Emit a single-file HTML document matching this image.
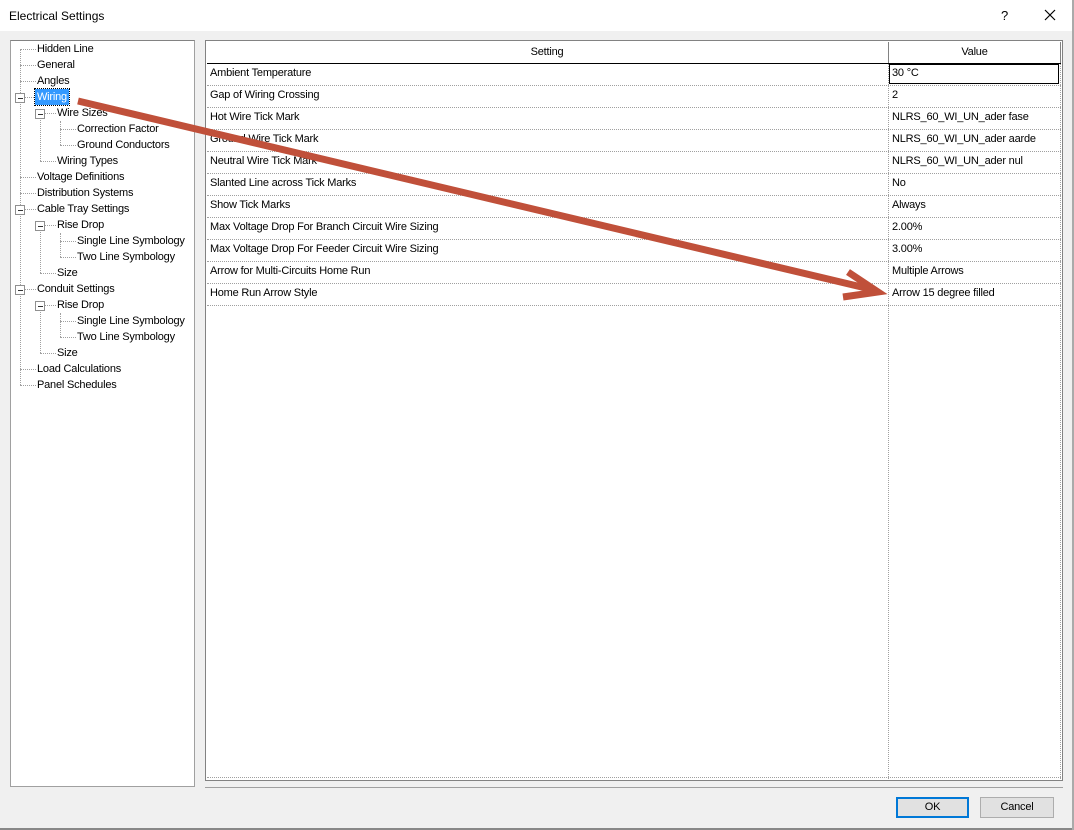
<!DOCTYPE html>
<html><head><style>
body{margin:0;width:1074px;height:830px;background:#f0f0f0;font-family:"Liberation Sans",sans-serif;font-size:11px;letter-spacing:-0.2px;color:#000;position:relative;overflow:hidden}
.abs{position:absolute}
#title{left:0;top:0;width:1074px;height:31px;background:#fff;font-size:12px;letter-spacing:0}
#tree{left:10px;top:40px;width:183px;height:745px;background:#fff;border:1px solid #a0a0a0;border-top-color:#828282}
.t{position:absolute;white-space:nowrap;line-height:14px}
.vd{position:absolute;border-left:1px dotted #a0a0a0;width:0}
.hd{position:absolute;border-top:1px dotted #a0a0a0;height:0}
.box{position:absolute;width:8px;height:8px;border:1px solid #909090;background:#fff}
.box:after{content:"";position:absolute;left:2px;top:4px;width:5px;height:1px;background:#333}
#grid{left:205px;top:40px;width:856px;height:739px;background:#fff;border:1px solid #828282}
.row{position:absolute;left:1px;width:854px;height:21px;border-bottom:1px dotted #a0a0a0}
.row span{position:absolute;top:3px;white-space:nowrap}
.btn{position:absolute;height:19px;background:#e1e1e1;border:1px solid #adadad;text-align:center;line-height:19px}
</style></head><body>
<div id="title" class="abs"><span class="abs" style="left:9px;top:9px">Electrical Settings</span>
<span class="abs" style="left:1001px;top:8px;font-size:13px">?</span>
<svg class="abs" style="left:1044px;top:9px" width="12" height="12"><path d="M1 1L11 11M11 1L1 11" stroke="#000" stroke-width="1.2"/></svg></div>

<div id="tree" class="abs">
<div class="vd" style="left:9px;top:8px;height:336px"></div>
<div class="vd" style="left:29px;top:72px;height:48px"></div>
<div class="vd" style="left:49px;top:80px;height:24px"></div>
<div class="vd" style="left:29px;top:184px;height:48px"></div>
<div class="vd" style="left:49px;top:192px;height:24px"></div>
<div class="vd" style="left:29px;top:264px;height:48px"></div>
<div class="vd" style="left:49px;top:272px;height:24px"></div>
<div class="hd" style="left:9px;top:8px;width:16px"></div>
<div class="hd" style="left:9px;top:24px;width:16px"></div>
<div class="hd" style="left:9px;top:40px;width:16px"></div>
<div class="hd" style="left:9px;top:56px;width:16px"></div>
<div class="hd" style="left:29px;top:72px;width:16px"></div>
<div class="hd" style="left:49px;top:88px;width:16px"></div>
<div class="hd" style="left:49px;top:104px;width:16px"></div>
<div class="hd" style="left:29px;top:120px;width:16px"></div>
<div class="hd" style="left:9px;top:136px;width:16px"></div>
<div class="hd" style="left:9px;top:152px;width:16px"></div>
<div class="hd" style="left:9px;top:168px;width:16px"></div>
<div class="hd" style="left:29px;top:184px;width:16px"></div>
<div class="hd" style="left:49px;top:200px;width:16px"></div>
<div class="hd" style="left:49px;top:216px;width:16px"></div>
<div class="hd" style="left:29px;top:232px;width:16px"></div>
<div class="hd" style="left:9px;top:248px;width:16px"></div>
<div class="hd" style="left:29px;top:264px;width:16px"></div>
<div class="hd" style="left:49px;top:280px;width:16px"></div>
<div class="hd" style="left:49px;top:296px;width:16px"></div>
<div class="hd" style="left:29px;top:312px;width:16px"></div>
<div class="hd" style="left:9px;top:328px;width:16px"></div>
<div class="hd" style="left:9px;top:344px;width:16px"></div>
<div class="box" style="left:4px;top:52px"></div>
<div class="box" style="left:24px;top:68px"></div>
<div class="box" style="left:4px;top:164px"></div>
<div class="box" style="left:24px;top:180px"></div>
<div class="box" style="left:4px;top:244px"></div>
<div class="box" style="left:24px;top:260px"></div>
<div class="t" style="left:26px;top:1px">Hidden Line</div>
<div class="t" style="left:26px;top:17px">General</div>
<div class="t" style="left:26px;top:33px">Angles</div>
<div class="t" style="left:24px;top:48px;background:#3399ff;color:#fff;padding:0 2px;height:16px;line-height:16px;outline:1px dotted #000">Wiring</div>
<div class="t" style="left:46px;top:65px">Wire Sizes</div>
<div class="t" style="left:66px;top:81px">Correction Factor</div>
<div class="t" style="left:66px;top:97px">Ground Conductors</div>
<div class="t" style="left:46px;top:113px">Wiring Types</div>
<div class="t" style="left:26px;top:129px">Voltage Definitions</div>
<div class="t" style="left:26px;top:145px">Distribution Systems</div>
<div class="t" style="left:26px;top:161px">Cable Tray Settings</div>
<div class="t" style="left:46px;top:177px">Rise Drop</div>
<div class="t" style="left:66px;top:193px">Single Line Symbology</div>
<div class="t" style="left:66px;top:209px">Two Line Symbology</div>
<div class="t" style="left:46px;top:225px">Size</div>
<div class="t" style="left:26px;top:241px">Conduit Settings</div>
<div class="t" style="left:46px;top:257px">Rise Drop</div>
<div class="t" style="left:66px;top:273px">Single Line Symbology</div>
<div class="t" style="left:66px;top:289px">Two Line Symbology</div>
<div class="t" style="left:46px;top:305px">Size</div>
<div class="t" style="left:26px;top:321px">Load Calculations</div>
<div class="t" style="left:26px;top:337px">Panel Schedules</div>
</div>

<div id="grid" class="abs">
<div class="abs" style="left:1px;top:1px;width:854px;height:21px;border-bottom:1px solid #000"></div>
<div class="abs" style="left:0;top:1px;width:682px;height:21px;border-right:1px solid #828282;text-align:center;line-height:21px">Setting</div>
<div class="abs" style="left:683px;top:1px;width:171px;height:21px;text-align:center;line-height:21px;border-right:1px solid #828282">Value</div>
<div class="vd" style="left:682px;top:23px;height:715px"></div>
<div class="vd" style="left:854px;top:23px;height:715px"></div>
<div class="row" style="top:23px"><span style="left:3px">Ambient Temperature</span><span style="left:685px">30 °C</span></div>
<div class="abs" style="left:683px;top:23px;width:168px;height:18px;border:1.5px solid #000"></div>
<div class="row" style="top:45px"><span style="left:3px">Gap of Wiring Crossing</span><span style="left:685px">2</span></div>
<div class="row" style="top:67px"><span style="left:3px">Hot Wire Tick Mark</span><span style="left:685px">NLRS_60_WI_UN_ader fase</span></div>
<div class="row" style="top:89px"><span style="left:3px">Ground Wire Tick Mark</span><span style="left:685px">NLRS_60_WI_UN_ader aarde</span></div>
<div class="row" style="top:111px"><span style="left:3px">Neutral Wire Tick Mark</span><span style="left:685px">NLRS_60_WI_UN_ader nul</span></div>
<div class="row" style="top:133px"><span style="left:3px">Slanted Line across Tick Marks</span><span style="left:685px">No</span></div>
<div class="row" style="top:155px"><span style="left:3px">Show Tick Marks</span><span style="left:685px">Always</span></div>
<div class="row" style="top:177px"><span style="left:3px">Max Voltage Drop For Branch Circuit Wire Sizing</span><span style="left:685px">2.00%</span></div>
<div class="row" style="top:199px"><span style="left:3px">Max Voltage Drop For Feeder Circuit Wire Sizing</span><span style="left:685px">3.00%</span></div>
<div class="row" style="top:221px"><span style="left:3px">Arrow for Multi-Circuits Home Run</span><span style="left:685px">Multiple Arrows</span></div>
<div class="row" style="top:243px"><span style="left:3px">Home Run Arrow Style</span><span style="left:685px">Arrow 15 degree filled</span></div>
<div class="abs" style="left:1px;top:736px;width:854px;border-top:1px dotted #a0a0a0"></div>
</div>

<div class="abs" style="left:205px;top:787px;width:858px;border-top:1px solid #a0a0a0"></div>
<div class="btn" style="left:896px;top:797px;width:69px;border:2px solid #0078d7;height:17px;line-height:17px">OK</div>
<div class="btn" style="left:980px;top:797px;width:72px">Cancel</div>
<div class="abs" style="left:0;top:828px;width:1074px;height:2px;background:#888"></div>
<div class="abs" style="left:1072px;top:0;width:2px;height:830px;background:#aaa"></div>

<svg class="abs" style="left:0;top:0" width="1074" height="830">
<path d="M78 101L870 289" stroke="#c0503a" stroke-width="7" fill="none"/>
<path d="M848 272L878 292L843 297" stroke="#c0503a" stroke-width="7" fill="none" stroke-linejoin="miter"/>
</svg>
</body></html>
